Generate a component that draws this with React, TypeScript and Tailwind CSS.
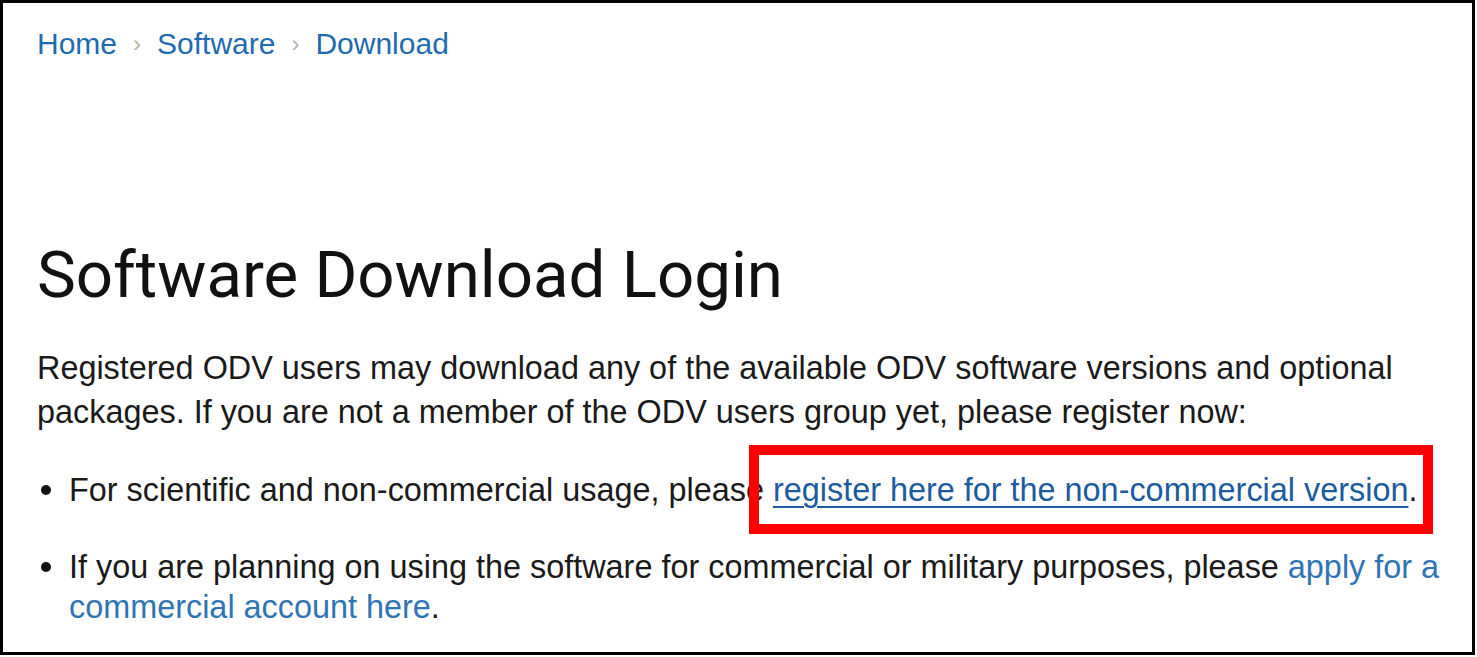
export default function App() {
  const crumbs = ["Home", "Software", "Download"];

  return (
    <div className="relative h-[657px] w-[1477px] bg-white">
      <div className="h-[655px] w-[1475px] border-[3px] border-black bg-white pl-[34px] pt-[23px] font-['Liberation_Sans',Arial,sans-serif] text-[#1a1a1a]">
        <nav className="flex items-center text-[30px] leading-[35px] text-[#1f6bb0]">
          {crumbs.map((c, i) => (
            <div key={c} className="flex items-center">
              {i > 0 && <span className="px-[16px] text-[24px] text-[#b8b2aa]">›</span>}
              <a href="#">{c}</a>
            </div>
          ))}
        </nav>

        <h1 className="mt-[181px] font-['Roboto',sans-serif] text-[65.4px] font-normal leading-[66px] text-[#111]">
          Software Download Login
        </h1>

        <div className="mt-[38px] w-[1408px] text-[32.4px] leading-[44px]">
          <p>
            Registered ODV users may download any of the available ODV software versions and optional
            packages. If you are not a member of the ODV users group yet, please register now:
          </p>

          <ul className="mt-[36px] flex flex-col gap-[37px] leading-[40px]">
            <li className="flex">
              <span className="flex h-[40px] w-[32px] shrink-0 items-center">
                <span className="ml-[4px] h-[10px] w-[10px] rounded-full bg-[#111]" />
              </span>
              <p>
                For scientific and non-commercial usage, please{" "}
                <a href="#" className="text-[#1b5c9e] underline decoration-[2px] underline-offset-[5px]">
                  register here for the non-commercial version
                </a>
                .
              </p>
            </li>
            <li className="flex">
              <span className="flex h-[40px] w-[32px] shrink-0 items-center">
                <span className="ml-[4px] h-[10px] w-[10px] rounded-full bg-[#111]" />
              </span>
              <p>
                If you are planning on using the software for commercial or military purposes, please{" "}
                <a href="#" className="text-[#2f74b5]">
                  apply for a commercial account here
                </a>
                .
              </p>
            </li>
          </ul>
        </div>
      </div>

      <div className="absolute left-[749px] top-[445px] h-[89px] w-[684px] border-[10px] border-[#ff0000]" />
    </div>
  );
}
